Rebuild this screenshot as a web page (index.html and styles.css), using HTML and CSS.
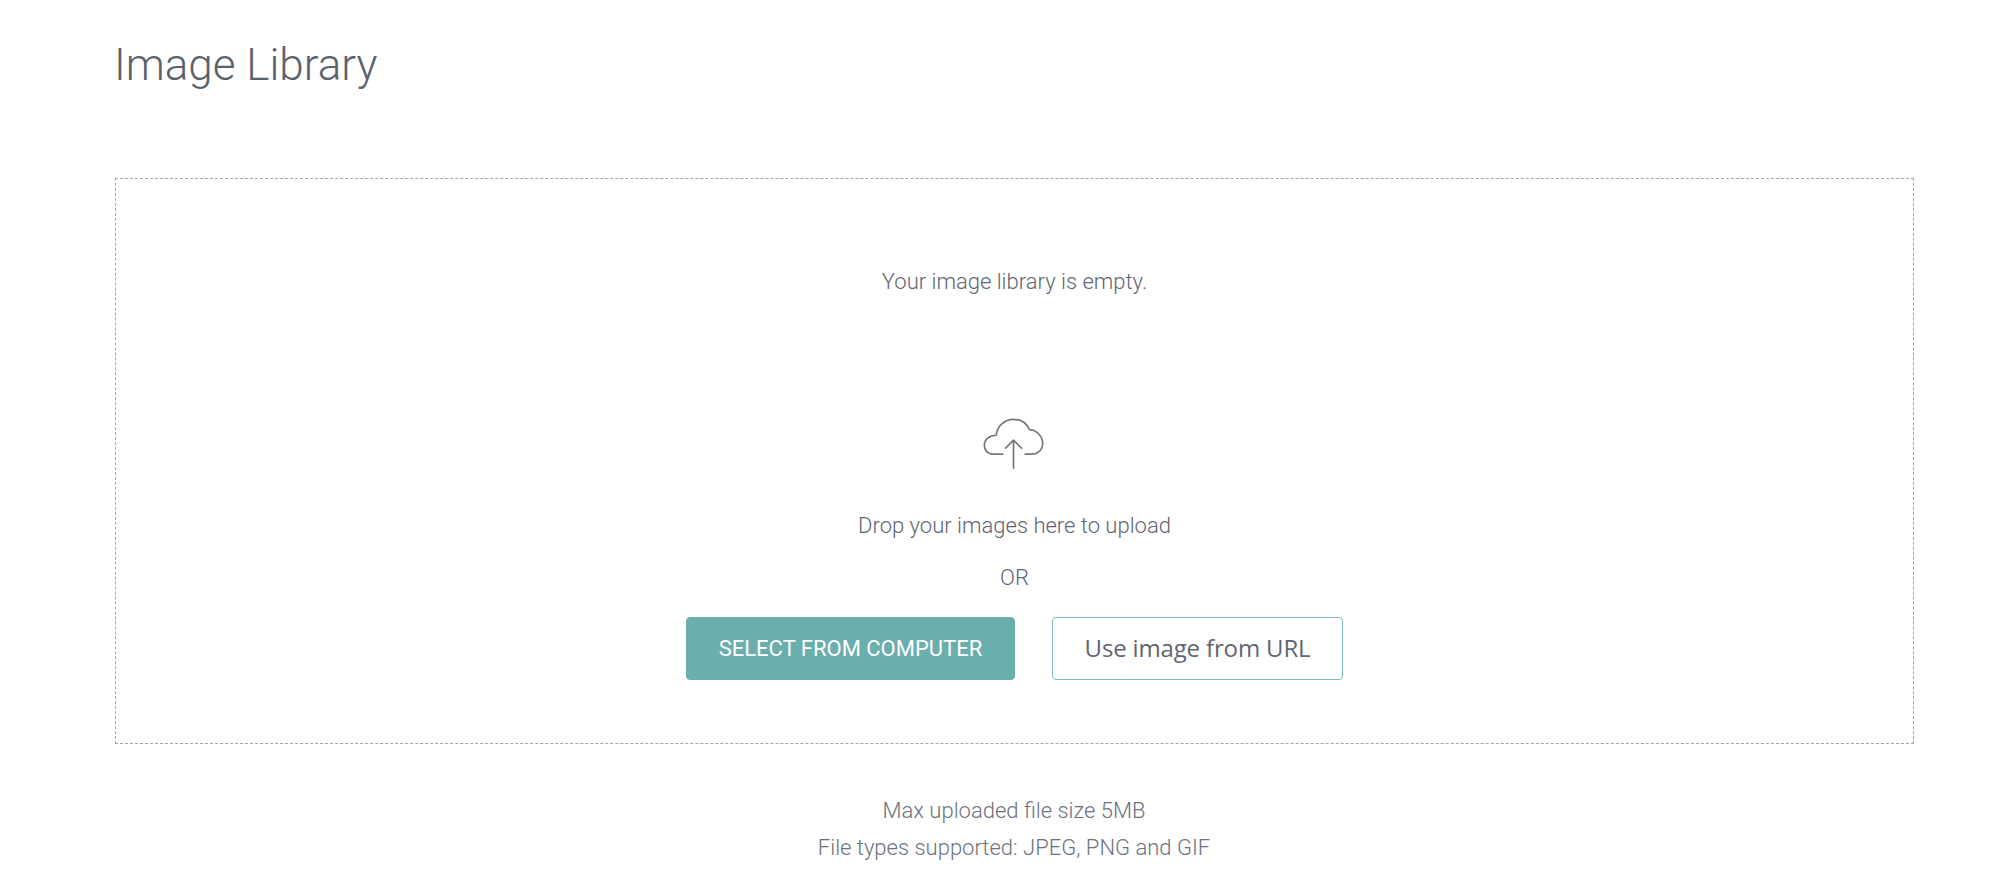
FILE: index.html
```html
<!DOCTYPE html>
<html>
<head>
    <meta charset="UTF-8">
    <title>Image Library</title>
    <link rel="stylesheet" href="styles.css">
</head>
<body>
    <div class="page">
        <h1>Image Library</h1>
        <div class="dropzone">
            <p class="empty">Your image library is empty.</p>
            <svg class="cloud" viewBox="100 80 190 160" width="63" height="53" fill="none" stroke="#777" stroke-width="5" stroke-linecap="round" stroke-linejoin="round">
                <path d="M160 192H130C112 192 104 178 104 165C104 148 118 135 140 135C142 108 165 87 192 87C215 87 232 100 240 118C262 118 280 140 280 160C280 180 265 192 245 192H227"/>
                <path d="M192 235V150M168 174L192 150L216 174"/>
            </svg>
            <p class="drop">Drop your images here to upload</p>
            <p class="or">OR</p>
            <div class="actions">
                <button class="btn btn-primary">SELECT FROM COMPUTER</button>
                <button class="btn btn-outline">Use image from URL</button>
            </div>
        </div>
        <div class="notes">
            <p>Max uploaded file size 5MB</p>
            <p>File types supported: JPEG, PNG and GIF</p>
        </div>
    </div>
</body>
</html>
```

FILE: styles.css
```css
html, body {
    margin: 0;
    height: 100%;
    background: #fff;
    overflow: hidden;
}
body {
    font-family: Roboto, "Liberation Sans", sans-serif;
    font-weight: 300;
    color: #5f6572;
}
.page {
    padding: 37px 85px 0 115px;
}
h1 {
    margin: 0 0 85px -1px;
    font-size: 44px;
    font-weight: 300;
    line-height: 56px;
    color: #5a616d;
}
p {
    margin: 0;
}
.dropzone {
    box-sizing: border-box;
    height: 566px;
    border: 1px dashed #a5a5a5;
    display: flex;
    flex-direction: column;
    align-items: center;
    font-size: 22px;
    line-height: 28px;
}
.empty {
    margin-top: 89px;
}
.cloud {
    margin-top: 121px;
    display: block;
}
.drop {
    margin-top: 42px;
}
.or {
    margin-top: 24px;
}
.actions {
    display: flex;
    gap: 37px;
    margin-top: 25px;
}
.btn {
    box-sizing: border-box;
    height: 63px;
    border-radius: 4px;
    cursor: pointer;
}
.btn-primary {
    width: 329px;
    background: #6aaead;
    border: 1px solid #6aaead;
    color: #fff;
    font-family: Roboto, sans-serif;
    font-weight: 400;
    font-size: 22px;
}
.btn-outline {
    width: 291px;
    padding: 0 0 2px;
    background: #fff;
    border: 1px solid #7fbcbb;
    color: #5f6572;
    font-family: "Open Sans", sans-serif;
    font-weight: 400;
    font-size: 24px;
    letter-spacing: -0.15px;
}
.notes {
    margin-top: 48px;
    text-align: center;
    font-size: 22px;
    line-height: 37px;
    padding-right: 1px;
    color: #6c727e;
}
```
